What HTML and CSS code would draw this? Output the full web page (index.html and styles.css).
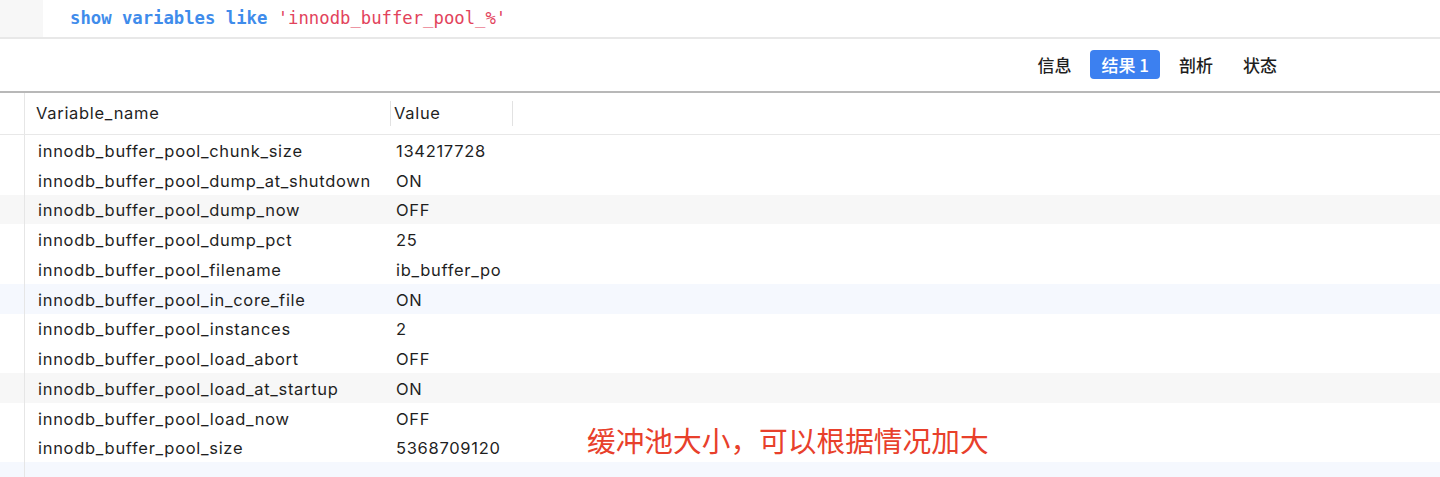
FILE: index.html
```html
<!DOCTYPE html>
<html lang="zh-CN">
<head>
<meta charset="utf-8">
<title>Query Result</title>
<link rel="stylesheet" href="styles.css">
</head>
<body>
<div class="editor">
  <div class="editor-gutter"></div>
  <div class="code"><span class="kw">show variables like</span> <span class="str">'innodb_buffer_pool_%'</span></div>
</div>
<div class="tabs">
  <div class="tab">信息</div>
  <div class="tab active">结果 1</div>
  <div class="tab">剖析</div>
  <div class="tab">状态</div>
</div>
<div class="table">
  <div class="row head">
    <div class="g"></div>
    <div class="c name"><span class="hcell">Variable_name</span></div>
    <div class="c value"><span class="hcell sep">Value</span></div>
    <div class="c rest"><span class="sepline"></span></div>
  </div>
  <div class="row"><div class="g"></div><div class="c name">innodb_buffer_pool_chunk_size</div><div class="c value">134217728</div></div>
  <div class="row"><div class="g"></div><div class="c name">innodb_buffer_pool_dump_at_shutdown</div><div class="c value">ON</div></div>
  <div class="row grey"><div class="g"></div><div class="c name">innodb_buffer_pool_dump_now</div><div class="c value">OFF</div></div>
  <div class="row"><div class="g"></div><div class="c name">innodb_buffer_pool_dump_pct</div><div class="c value">25</div></div>
  <div class="row"><div class="g"></div><div class="c name">innodb_buffer_pool_filename</div><div class="c value">ib_buffer_po</div></div>
  <div class="row blue"><div class="g"></div><div class="c name">innodb_buffer_pool_in_core_file</div><div class="c value">ON</div></div>
  <div class="row"><div class="g"></div><div class="c name">innodb_buffer_pool_instances</div><div class="c value">2</div></div>
  <div class="row"><div class="g"></div><div class="c name">innodb_buffer_pool_load_abort</div><div class="c value">OFF</div></div>
  <div class="row grey"><div class="g"></div><div class="c name">innodb_buffer_pool_load_at_startup</div><div class="c value">ON</div></div>
  <div class="row"><div class="g"></div><div class="c name">innodb_buffer_pool_load_now</div><div class="c value">OFF</div></div>
  <div class="row"><div class="g"></div><div class="c name">innodb_buffer_pool_size</div><div class="c value">5368709120</div></div>
  <div class="row blue"><div class="g"></div><div class="c name"></div><div class="c value"></div></div>
  <div class="note">缓冲池大小，可以根据情况加大</div>
</div>
</body>
</html>
```
FILE: styles.css
```css
html, body {
  margin: 0;
  padding: 0;
  background: #ffffff;
}
body {
  font-family: Inter, "Noto Sans", "Noto Sans CJK SC", sans-serif;
  color: #1f1f1f;
  overflow: hidden;
  height: 477px;
}
.editor {
  display: flex;
  height: 37px;
  border-bottom: 2px solid #e8e8e8;
}
.editor-gutter {
  width: 43px;
  background: #f7f7f7;
}
.code {
  padding-left: 27px;
  font-family: "DejaVu Sans Mono", monospace;
  font-size: 17.25px;
  font-weight: bold;
  line-height: 36px;
  white-space: pre;
}
.kw {
  color: #3f8ceb;
}
.str {
  color: #e2435c;
  font-weight: normal;
}
.tabs {
  display: flex;
  justify-content: flex-end;
  align-items: center;
  gap: 8px;
  height: 50px;
  padding-bottom: 2px;
  padding-right: 152px;
  border-bottom: 2px solid #b8b8b8;
}
.tab {
  font-family: "Noto Sans CJK SC", sans-serif;
  font-size: 17px;
  font-weight: 500;
  line-height: 29px;
  height: 29px;
  padding: 0 11px;
  color: #1e1e1e;
  border-radius: 4px;
}
.tab.active {
  background: #3c80f0;
  color: #ffffff;
}
.table {
  position: relative;
}
.row {
  display: flex;
  height: 29.75px;
  align-items: center;
  font-size: 16.5px;
  letter-spacing: 0.7px;
}
.row.head {
  height: 41px;
  border-bottom: 1px solid #e8e8e8;
}
.row.grey {
  background: #f7f7f7;
}
.row.blue {
  background: #f5f8fe;
}
.g {
  width: 24px;
  align-self: stretch;
  border-right: 1px solid #e6e6e6;
  flex: none;
}
.c {
  white-space: nowrap;
  overflow: hidden;
  transform: translateY(1px);
}
.name {
  width: 352px;
  padding-left: 13px;
  flex: none;
}
.value {
  width: 116px;
  padding-left: 6px;
  flex: none;
}
.head .c {
  transform: none;
}
.head .name {
  padding-left: 11px;
  width: 354px;
}
.head .value {
  padding-left: 0;
  width: 122px;
}
.hcell {
  display: inline-block;
  line-height: 25px;
}
.hcell.sep {
  border-left: 1px solid #e2e2e2;
  padding-left: 3px;
}
.sepline {
  display: block;
  width: 1px;
  height: 25px;
  background: #e2e2e2;
}
.note {
  position: absolute;
  left: 587px;
  top: 327px;
  font-family: "Noto Sans CJK SC", sans-serif;
  font-size: 28.7px;
  line-height: 40px;
  color: #e8402b;
}
```
